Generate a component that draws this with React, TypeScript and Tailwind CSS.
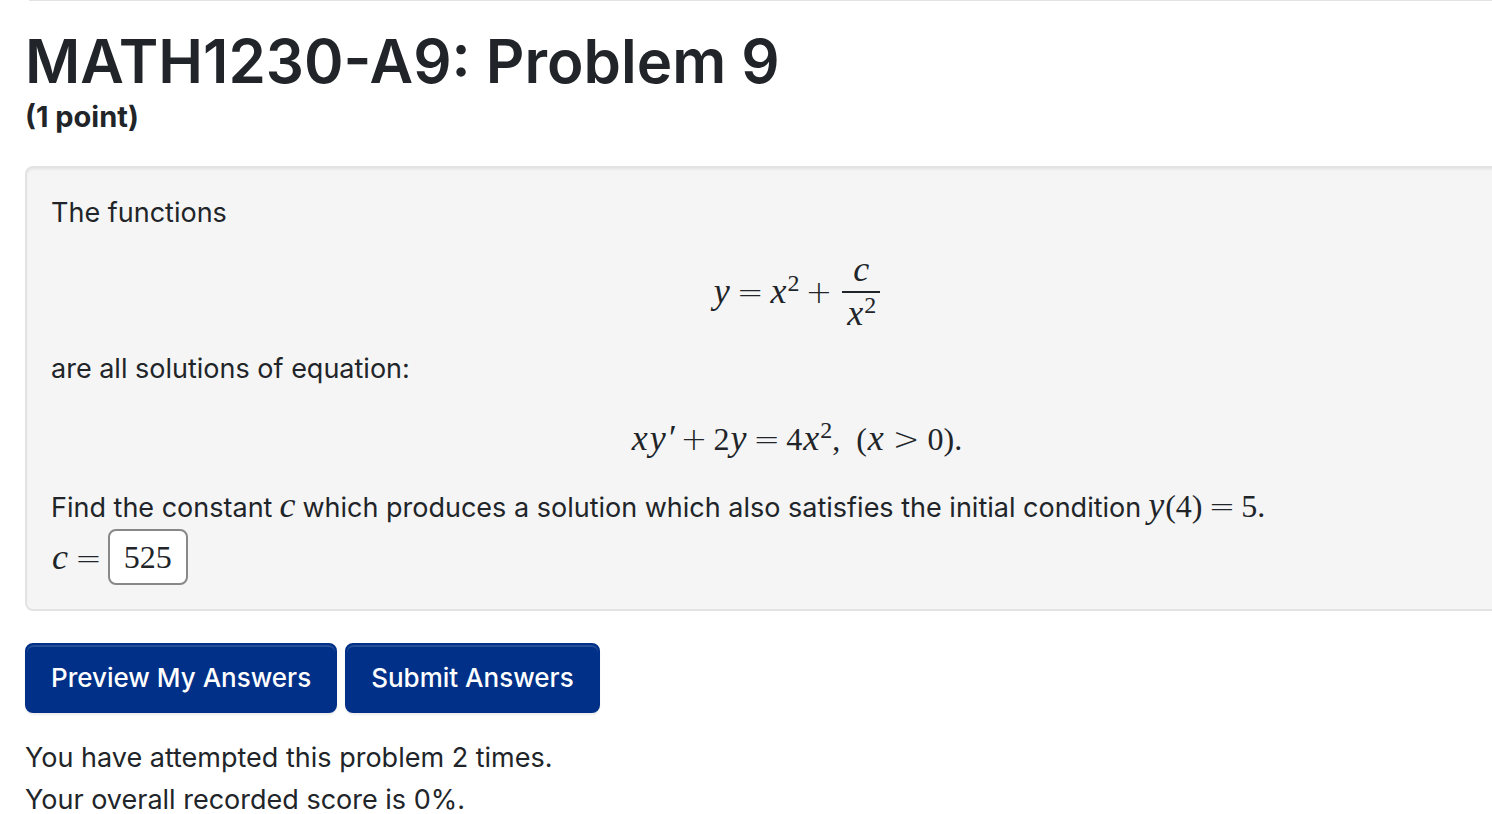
import { useState } from 'react'
import type { ReactNode } from 'react'
import clsx from 'clsx'

interface MathProps {
  children: ReactNode
  className?: string
}

function Formula({ children, className }: MathProps) {
  return (
    <span className={clsx('inline-flex font-[Liberation_Serif,serif] text-[32px] leading-9 whitespace-nowrap', className ?? 'items-baseline')}>
      {children}
    </span>
  )
}

function Var({ children }: MathProps) {
  return <i className="px-px text-4xl leading-9">{children}</i>
}

// Relations and operators are drawn wider than the digits around them
function Op({ children, className }: MathProps) {
  return (
    <span className={clsx('font-[DejaVu_Sans,sans-serif] text-[32px] leading-9 font-extralight', className ?? 'mx-1.5')}>
      {children}
    </span>
  )
}

function Sup({ children }: MathProps) {
  return <span className="self-start text-2xl leading-5">{children}</span>
}

function ActionButton({ children }: { children: ReactNode }) {
  return (
    <button
      type="submit"
      className="rounded-lg border-2 border-[#003087] bg-[#003087] px-6 py-3 text-[26px] leading-[42px] font-medium text-white shadow-[inset_0_2px_0_rgba(255,255,255,0.15),0_2px_2px_rgba(0,0,0,0.075)]"
    >
      {children}
    </button>
  )
}

export default function App() {
  const [answer, setAnswer] = useState('525')

  return (
    <main className="overflow-x-hidden bg-white pl-[25px] font-[Inter,sans-serif] text-[27px] leading-[42px] text-[#212529]">
      <hr className="ml-1 border-[#e3e3e3]" />
      <h1 className="mt-6 text-[60px] leading-[72px] font-semibold">MATH1230-A9: Problem 9</h1>
      <p className="text-[29px] leading-10 font-bold">(1 point)</p>

      <form onSubmit={(e) => e.preventDefault()}>
        {/* Problem text */}
        <section className="mt-[29px] -mr-[76px] rounded-lg border-2 border-[#e3e3e3] bg-[#f5f5f5] p-6 shadow-[inset_0_2px_2px_rgba(0,0,0,0.05)]">
          <p>The functions</p>

          <div className="flex h-[114px] items-center justify-center">
            <Formula className="items-center">
              <span className="flex items-baseline">
                <Var>y</Var>
                <Op>=</Op>
                <Var>x</Var>
                <Sup>2</Sup>
                <Op>+</Op>
              </span>
              <span className="ml-1 flex flex-col items-center">
                <span className="flex pb-1"><Var>c</Var></span>
                <span className="flex border-t-2 border-[#212529] px-1 pt-0.5">
                  <Var>x</Var>
                  <Sup>2</Sup>
                </span>
              </span>
            </Formula>
          </div>

          <p>are all solutions of equation:</p>

          <div className="flex h-[97px] items-center justify-center">
            <Formula>
              <Var>x</Var>
              <Var>y</Var>
              <i className="text-4xl leading-9">′</i>
              <Op>+</Op>
              <span>2</span>
              <Var>y</Var>
              <Op>=</Op>
              <span>4</span>
              <Var>x</Var>
              <Sup>2</Sup>
              <span className="mr-4">,</span>
              <span>(</span>
              <Var>x</Var>
              <Op className="mx-2">&gt;</Op>
              <span>0).</span>
            </Formula>
          </div>

          <p className="flex items-baseline gap-1.5 whitespace-nowrap">
            <span>Find the constant</span>
            <Formula><Var>c</Var></Formula>
            <span>which produces a solution which also satisfies the initial condition</span>
            <Formula>
              <Var>y</Var>
              <span>(4)</span>
              <Op>=</Op>
              <span>5.</span>
            </Formula>
          </p>

          <div className="flex items-center">
            <label htmlFor="answer" className="flex">
              <Formula>
                <Var>c</Var>
                <Op>=</Op>
              </Formula>
            </label>
            <input
              id="answer"
              type="text"
              value={answer}
              onChange={(e) => setAnswer(e.target.value)}
              className="h-14 w-20 rounded-lg border-2 border-[#888] bg-white text-center font-[Liberation_Serif,serif] text-[32px]"
            />
          </div>
        </section>

        <div className="mt-8 flex gap-2">
          <ActionButton>Preview My Answers</ActionButton>
          <ActionButton>Submit Answers</ActionButton>
        </div>
      </form>

      {/* Attempt summary */}
      <div className="mt-6">
        <p>You have attempted this problem 2 times.</p>
        <p>Your overall recorded score is 0%.</p>
      </div>
    </main>
  )
}
